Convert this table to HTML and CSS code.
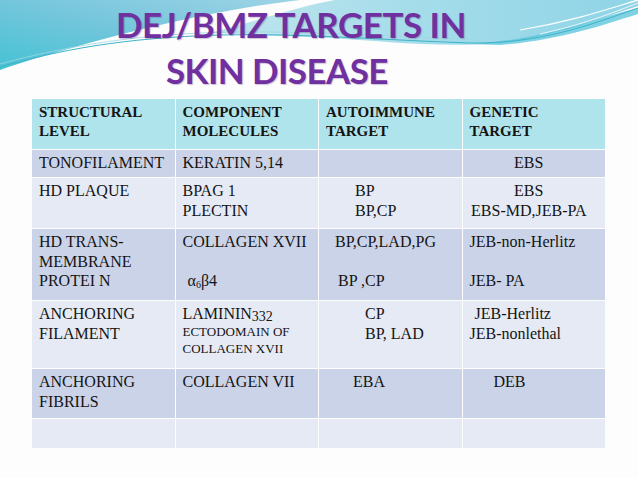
FILE: index.html
```html
<!DOCTYPE html>
<html>
<head>
<meta charset="utf-8">
<link rel="stylesheet" href="styles.css">
</head>
<body>
<div class="slide">
  <header class="title-area">
    <svg class="swoosh" width="638" height="100" viewBox="0 0 638 100" xmlns="http://www.w3.org/2000/svg">
      <defs>
        <linearGradient id="gLeft" x1="0" y1="1" x2="1" y2="0">
          <stop offset="0" stop-color="#45c2d3"/>
          <stop offset="0.5" stop-color="#74c6dc"/>
          <stop offset="1" stop-color="#9fd3e6"/>
        </linearGradient>
        <linearGradient id="gRight" x1="0" y1="0" x2="1" y2="0">
          <stop offset="0" stop-color="#bfe6ee"/>
          <stop offset="0.5" stop-color="#a4dcea"/>
          <stop offset="1" stop-color="#8fd4e6"/>
        </linearGradient>
      </defs>
      <path d="M0,0 H300 C230,8 160,24 100,40 C60,51 28,60 0,70 Z" fill="url(#gLeft)"/>
      <path d="M210,33 C260,20 300,6 335,0 H638 V6 C600,18 560,36 500,43 C440,48 380,41 330,38 C290,36 250,35 210,33 Z" fill="url(#gRight)"/>
      <path d="M470,44 C540,40 590,20 638,8 V14 C600,26 560,40 500,45 Z" fill="#5fc7dc" opacity="0.8"/>
      <path d="M0,67 C60,50 120,38 220,35 C300,33 380,40 470,43 C540,44 590,25 638,8" fill="none" stroke="#3fb3c8" stroke-width="1"/>
      <path d="M0,64 C70,45 140,34 230,32 C320,31 400,37 480,40" fill="none" stroke="#9fd6e2" stroke-width="0.8"/>
      <path d="M520,30 C570,22 605,10 638,0" fill="none" stroke="#ffffff" stroke-width="1.2"/>
      <path d="M540,34 C585,24 612,13 638,3" fill="none" stroke="#ffffff" stroke-width="0.8"/>
    </svg>
    <h1 class="title">
      <span class="line1">DEJ/BMZ TARGETS IN</span>
      <span class="line2">SKIN DISEASE</span>
    </h1>
  </header>

  <table class="grid">
    <colgroup><col class="c"><col class="c"><col class="c"><col class="c"></colgroup>
    <thead>
      <tr class="head">
        <th>STRUCTURAL<br>LEVEL</th>
        <th>COMPONENT<br>MOLECULES</th>
        <th>AUTOIMMUNE<br>TARGET</th>
        <th>GENETIC<br>TARGET</th>
      </tr>
    </thead>
    <tbody>
      <tr class="dark r1">
        <td>TONOFILAMENT</td>
        <td>KERATIN 5,14</td>
        <td></td>
        <td class="ctr">EBS</td>
      </tr>
      <tr class="light r2">
        <td>HD PLAQUE</td>
        <td>BPAG 1<br>PLECTIN</td>
        <td class="in28">BP<br>BP,CP</td>
        <td class="ctr">EBS<br>EBS-MD,JEB-PA</td>
      </tr>
      <tr class="dark r3">
        <td>HD TRANS-<br>MEMBRANE<br>PROTEI N</td>
        <td>COLLAGEN XVII<br><br><span class="ab">α<sub>6</sub>β4</span></td>
        <td class="in8">BP,CP,LAD,PG<br><br><span class="bpcp">BP ,CP</span></td>
        <td>JEB-non-Herlitz<br><br>JEB- PA</td>
      </tr>
      <tr class="light r4">
        <td>ANCHORING<br>FILAMENT</td>
        <td>LAMININ<span class="os">332</span><br><span class="small">ECTODOMAIN OF<br>COLLAGEN XVII</span></td>
        <td class="in38">CP<br>BP, LAD</td>
        <td><span class="jh">JEB-Herlitz</span><br>JEB-nonlethal</td>
      </tr>
      <tr class="dark r5">
        <td>ANCHORING<br>FIBRILS</td>
        <td>COLLAGEN VII</td>
        <td class="in26">EBA</td>
        <td class="in24">DEB</td>
      </tr>
      <tr class="light r6">
        <td></td><td></td><td></td><td></td>
      </tr>
    </tbody>
  </table>
</div>
</body>
</html>
```

FILE: styles.css
```css
html, body {
  margin: 0;
  padding: 0;
  background: #fdfdfd;
}

.slide {
  width: 638px;
  height: 478px;
  position: relative;
  overflow: hidden;
  background: #fdfdfd;
}

.title-area {
  position: relative;
  height: 98px;
}

.swoosh {
  position: absolute;
  left: 0;
  top: 0;
}

.title {
  position: relative;
  margin: 0;
  font-family: Lato, "Open Sans", sans-serif;
  font-weight: 700;
  font-size: 35px;
  line-height: 46px;
  color: #7030a0;
  text-shadow: 1px 1px 1px rgba(60, 20, 90, 0.25);
  display: flex;
  flex-direction: column;
}

.line1 {
  padding-left: 116px;
  padding-top: 1px;
  letter-spacing: -0.5px;
}

.line2 {
  padding-left: 166px;
  letter-spacing: -0.6px;
}

.grid {
  margin-left: 31px;
  border-collapse: collapse;
  table-layout: fixed;
  width: 575px;
  font-family: "Liberation Serif", "Times New Roman", serif;
  color: #141414;
}

.grid col.c {
  width: 143px;
}

.grid th,
.grid td {
  border: 1px solid #fdfdfd;
  vertical-align: top;
  text-align: left;
  padding: 3px 4px 0 7px;
  white-space: nowrap;
  overflow: hidden;
}

.grid th {
  font-weight: 700;
  font-size: 15px;
  line-height: 19px;
  padding-top: 4px;
  background: #b0e4ed;
}

.grid td {
  font-size: 16px;
  line-height: 19.5px;
}

.dark td { background: #cbd3e8; }
.light td { background: #e6eaf4; }

.head { height: 51px; }
.r1 { height: 28px; }
.r2 { height: 51px; }
.r3 { height: 72px; }
.r4 { height: 68px; }
.r5 { height: 50px; }
.r6 { height: 30px; }

.grid td.ctr {
  text-align: center;
  padding-left: 0;
  padding-right: 10px;
}

.grid td.in28 { padding-left: 36px; }
.grid td.in8 { padding-left: 16px; }
.grid td.in38 { padding-left: 46px; }
.grid td.in26 { padding-left: 34px; }
.grid td.in24 { padding-left: 31px; }

.ab {
  display: inline-block;
  padding-left: 5px;
}

.ab sub {
  font-size: 10px;
  vertical-align: -2px;
  line-height: 0;
}

.bpcp {
  display: inline-block;
  padding-left: 3px;
}

.jh {
  display: inline-block;
  padding-left: 5px;
}

.os {
  font-size: 14px;
  vertical-align: -2px;
  line-height: 0;
}

.small {
  display: inline-block;
  font-size: 13px;
  line-height: 17px;
  margin-top: -1px;
}
```
